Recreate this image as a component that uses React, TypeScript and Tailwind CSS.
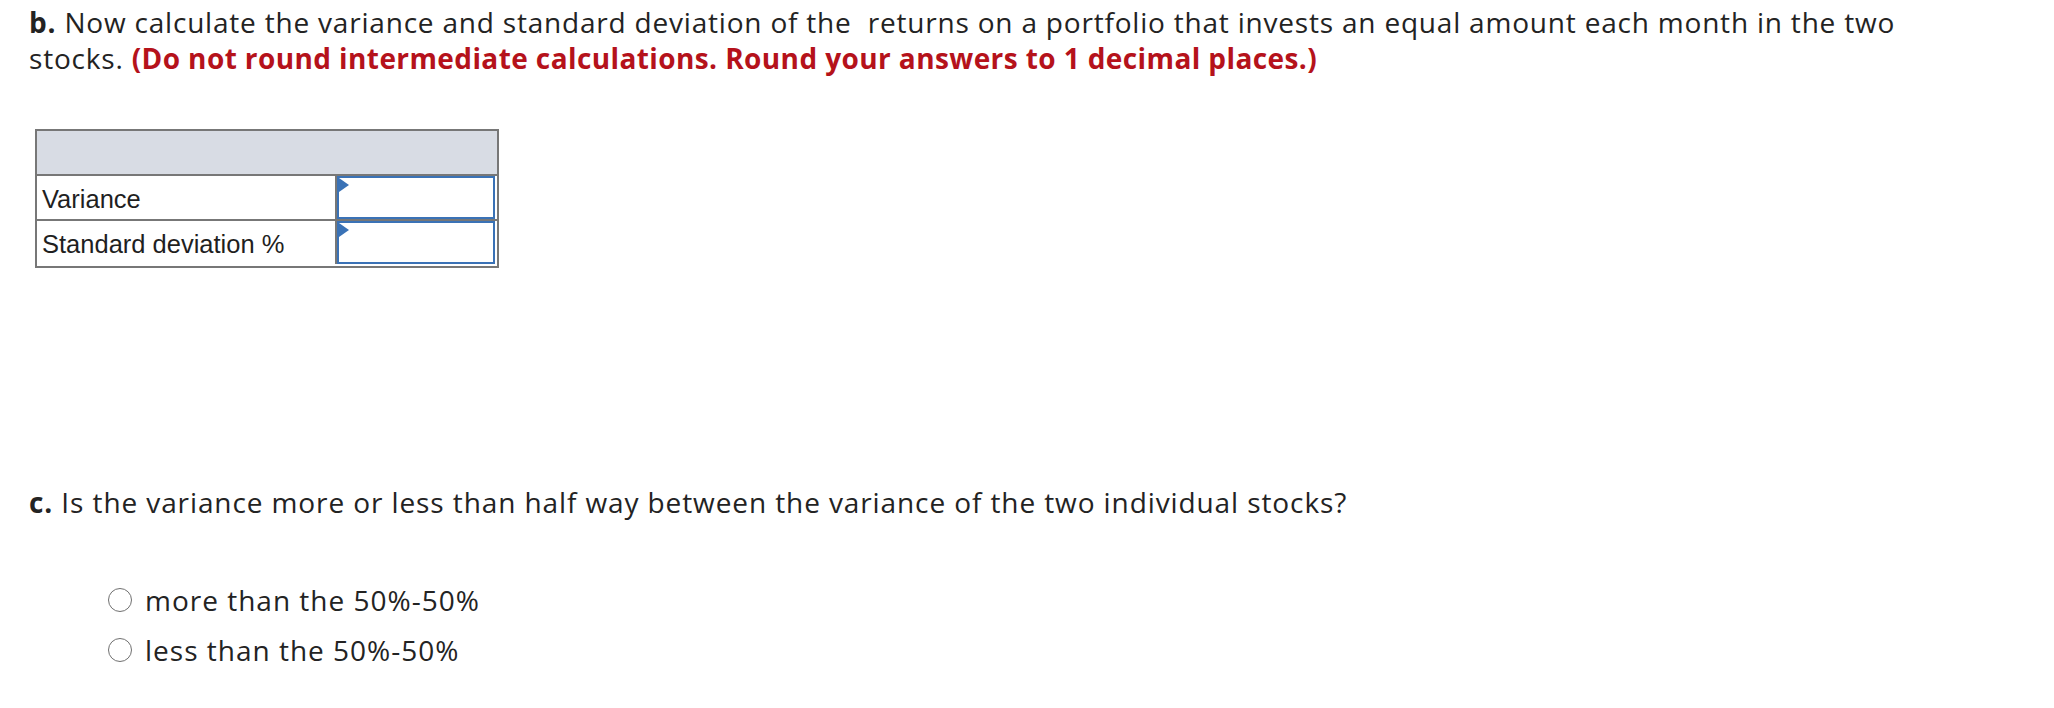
import React from "react";

function InputCell() {
  return (
    <div className="relative h-full w-full border-2 border-[#3a72b6] bg-white">
      <svg className="absolute left-0 top-0" width="11" height="14" viewBox="0 0 11 14">
        <polygon points="0,0 10,7 0,14" fill="#3a72b6" />
      </svg>
    </div>
  );
}

function Row({ label, last }: { label: string; last?: boolean }) {
  return (
    <div className={`grid h-[45px] grid-cols-[300px_158px] ${last ? "" : "border-b-2 border-[#777777]"}`}>
      <div
        className="flex h-[43px] items-center border-r-2 border-[#777777] pl-[5px] pt-[3px] text-[25.5px] text-[#1f1f1f]"
        style={{ fontFamily: '"Liberation Sans", Arial, sans-serif' }}
      >
        {label}
      </div>
      <div className="h-[43px]">
        <InputCell />
      </div>
    </div>
  );
}

function Radio({ label }: { label: string }) {
  return (
    <div className="flex h-[50px] items-center gap-[13px]">
      <span className="block h-[24px] w-[24px] shrink-0 rounded-full border-[1.5px] border-[#707070] bg-white" />
      <span>{label}</span>
    </div>
  );
}

export default function App() {
  return (
    <div
      className="min-h-[708px] w-[2054px] bg-white pl-[29px] pt-[4px] text-[28px] leading-[36px] tracking-[0.8px] text-[#232323]"
      style={{ fontFamily: '"Open Sans", "Noto Sans", sans-serif' }}
    >
      <p className="whitespace-nowrap">
        <span className="font-bold">b.</span> Now calculate the variance and standard deviation of the&nbsp; returns on a
        portfolio that invests an equal amount each month in the two
        <br />
        stocks.{" "}
        <span className="font-bold tracking-[0.4px] text-[#b5121b]">
          (Do not round intermediate calculations. Round your answers to 1 decimal places.)
        </span>
      </p>

      <div className="ml-[6px] mt-[53px] w-[464px] border-2 border-[#777777] tracking-normal">
        <div className="h-[45px] border-b-2 border-[#777777] bg-[#d8dce4]" />
        <Row label="Variance" />
        <Row label="Standard deviation %" last />
      </div>

      <p className="mt-[216px] whitespace-nowrap tracking-[0.9px]">
        <span className="font-bold">c.</span> Is the variance more or less than half way between the variance of the two
        individual stocks?
      </p>

      <div className="ml-[79px] mt-[55px] tracking-[1px]">
        <Radio label="more than the 50%-50%" />
        <Radio label="less than the 50%-50%" />
      </div>
    </div>
  );
}
